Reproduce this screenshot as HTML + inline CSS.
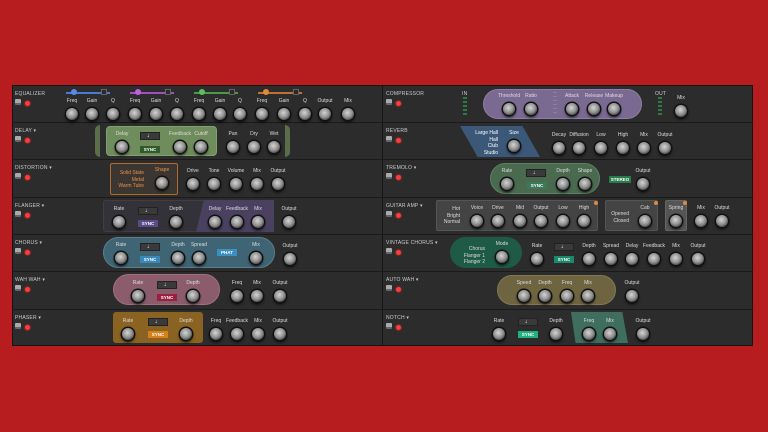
<!DOCTYPE html>
<html><head><meta charset="utf-8">
<style>
*{margin:0;padding:0;box-sizing:border-box}
body{width:768px;height:432px;background:#b71c1e;position:relative;overflow:hidden;font-family:"Liberation Sans",sans-serif}
#p{position:absolute;left:12px;top:85px;width:741px;height:261px;background:#2c2c2c;border:1px solid #151515}
.r{position:absolute;height:1px;background:#1a1a1a}
.v{position:absolute;left:382px;top:85px;width:1px;height:261px;background:#151515}
.n{position:absolute;font-size:5px;color:#ccc;letter-spacing:.2px}
.ic{position:absolute;width:6px;height:6px;background:#aaa;border-radius:1px;border-bottom:2px solid #666}
.rd{position:absolute;width:5px;height:5px;border-radius:50%;background:#ff3a3a;box-shadow:0 0 2px #f33}
.c{position:absolute;width:40px;margin-left:-20px;text-align:center;font-size:5px;color:#ddd;line-height:6px}
.c i{display:block;width:12px;height:12px;border-radius:50%;margin:4px auto 0;background:radial-gradient(circle at 45% 40%,#d4d4d4,#8e8e8e 50%,#3c3c3c 80%);box-shadow:0 0 0 1.5px #111,0 2px 3px #000}
.b{position:absolute}
.nt{position:absolute;width:20px;height:8px;margin-left:-10px;background:#3a3a3a;border:1px solid #222;color:#fff;font-size:6px;line-height:6px;text-align:center}
.sy{position:absolute;width:20px;height:7px;margin-left:-10px;font-size:4.5px;line-height:7px;text-align:center;color:#fff;font-weight:bold}
.t{position:absolute;font-size:5px;line-height:6.5px;text-align:right;color:#ddd}
.m{position:absolute;width:4px;height:20px;background:repeating-linear-gradient(#3a5 0 2px,transparent 2px 4px);opacity:.6}
</style></head><body>
<div id="p"></div>
<div class="v"></div>
<div class="r" style="left:12px;top:122px;width:741px"></div>
<div class="r" style="left:12px;top:159px;width:741px"></div>
<div class="r" style="left:12px;top:197px;width:741px"></div>
<div class="r" style="left:12px;top:234px;width:741px"></div>
<div class="r" style="left:12px;top:271px;width:741px"></div>
<div class="r" style="left:12px;top:309px;width:741px"></div>

<div class="n" style="left:15px;top:91px">EQUALIZER</div>
<div class="n" style="left:15px;top:128px">DELAY ▾</div>
<div class="n" style="left:15px;top:165px">DISTORTION ▾</div>
<div class="n" style="left:15px;top:203px">FLANGER ▾</div>
<div class="n" style="left:15px;top:240px">CHORUS ▾</div>
<div class="n" style="left:15px;top:277px">WAH WAH ▾</div>
<div class="n" style="left:15px;top:315px">PHASER ▾</div>
<div class="n" style="left:386px;top:91px">COMPRESSOR</div>
<div class="n" style="left:386px;top:128px">REVERB</div>
<div class="n" style="left:386px;top:165px">TREMOLO ▾</div>
<div class="n" style="left:386px;top:203px">GUITAR AMP ▾</div>
<div class="n" style="left:386px;top:240px">VINTAGE CHORUS ▾</div>
<div class="n" style="left:386px;top:277px">AUTO WAH ▾</div>
<div class="n" style="left:386px;top:315px">NOTCH ▾</div>
<div class="ic" style="left:15px;top:99px"></div><div class="rd" style="left:25px;top:101px"></div>
<div class="ic" style="left:15px;top:136px"></div><div class="rd" style="left:25px;top:138px"></div>
<div class="ic" style="left:15px;top:173px"></div><div class="rd" style="left:25px;top:175px"></div>
<div class="ic" style="left:15px;top:211px"></div><div class="rd" style="left:25px;top:213px"></div>
<div class="ic" style="left:15px;top:248px"></div><div class="rd" style="left:25px;top:250px"></div>
<div class="ic" style="left:15px;top:285px"></div><div class="rd" style="left:25px;top:287px"></div>
<div class="ic" style="left:15px;top:323px"></div><div class="rd" style="left:25px;top:325px"></div>
<div class="ic" style="left:386px;top:99px"></div><div class="rd" style="left:396px;top:101px"></div>
<div class="ic" style="left:386px;top:136px"></div><div class="rd" style="left:396px;top:138px"></div>
<div class="ic" style="left:386px;top:173px"></div><div class="rd" style="left:396px;top:175px"></div>
<div class="ic" style="left:386px;top:211px"></div><div class="rd" style="left:396px;top:213px"></div>
<div class="ic" style="left:386px;top:248px"></div><div class="rd" style="left:396px;top:250px"></div>
<div class="ic" style="left:386px;top:285px"></div><div class="rd" style="left:396px;top:287px"></div>
<div class="ic" style="left:386px;top:323px"></div><div class="rd" style="left:396px;top:325px"></div>

<div class="b" style="left:66px;top:92px;width:44px;height:1.5px;background:#4a7ad8"></div>
<div class="b" style="left:71px;top:89px;width:6px;height:6px;border-radius:50%;background:#5a8ae8"></div>
<div class="b" style="left:101px;top:89px;width:6px;height:6px;border:1px solid #666;background:#2a2a2a"></div>
<div class="b" style="left:130px;top:92px;width:44px;height:1.5px;background:#a050c0"></div>
<div class="b" style="left:135px;top:89px;width:6px;height:6px;border-radius:50%;background:#c060e0"></div>
<div class="b" style="left:165px;top:89px;width:6px;height:6px;border:1px solid #666;background:#2a2a2a"></div>
<div class="b" style="left:194px;top:92px;width:44px;height:1.5px;background:#4a9a4a"></div>
<div class="b" style="left:199px;top:89px;width:6px;height:6px;border-radius:50%;background:#5ac05a"></div>
<div class="b" style="left:229px;top:89px;width:6px;height:6px;border:1px solid #666;background:#2a2a2a"></div>
<div class="b" style="left:258px;top:92px;width:44px;height:1.5px;background:#c07030"></div>
<div class="b" style="left:263px;top:89px;width:6px;height:6px;border-radius:50%;background:#e08a3a"></div>
<div class="b" style="left:293px;top:89px;width:6px;height:6px;border:1px solid #666;background:#2a2a2a"></div>

<div class="b" style="left:95px;top:125px;width:195px;height:32px;border-left:5px solid #5a6e4a;border-right:5px solid #5a6e4a;border-radius:5px"></div>
<div class="b" style="left:106px;top:126px;width:111px;height:30px;background:#6f8c5c;border-radius:4px;border:1px solid #84a070"></div>
<div class="b" style="left:110px;top:163px;width:68px;height:32px;background:#3b3631;border:1px solid #b06a30;border-radius:2px"></div>
<div class="b" style="left:103px;top:200px;width:171px;height:32px;background:#333238;border:1px solid #3e3d48;border-radius:3px"></div>
<div class="b" style="left:196px;top:200px;width:78px;height:32px;background:#4a4060;clip-path:polygon(10% 0,100% 0,100% 100%,0 100%)"></div>
<div class="b" style="left:103px;top:237px;width:172px;height:31px;background:#3f6473;border:1px solid #5a8090;border-radius:16px"></div>
<div class="b" style="left:113px;top:274px;width:107px;height:31px;background:#8a5c6c;border:1px solid #a07080;border-radius:16px"></div>
<div class="b" style="left:113px;top:312px;width:90px;height:31px;background:#8a6222;border-radius:3px"></div>

<div class="b" style="left:483px;top:89px;width:159px;height:30px;background:#7a6a92;border:1px solid #8e7ea6;border-radius:15px"></div>
<div class="b" style="left:460px;top:126px;width:80px;height:31px;background:#3b5878;clip-path:polygon(0 0,78% 0,100% 100%,22% 100%)"></div>
<div class="b" style="left:490px;top:163px;width:110px;height:31px;background:#4a6a50;border:1px solid #5e8064;border-radius:16px"></div>
<div class="b" style="left:436px;top:200px;width:162px;height:31px;background:#444;border:1px solid #555;border-radius:2px"></div>
<div class="b" style="left:605px;top:200px;width:53px;height:31px;background:#444;border:1px solid #555;border-radius:2px"></div>
<div class="b" style="left:665px;top:200px;width:22px;height:31px;background:#555;border:1px solid #666;border-radius:2px"></div>
<div class="b" style="left:594px;top:201px;width:4px;height:4px;border-radius:50%;background:#e08a3a"></div>
<div class="b" style="left:654px;top:201px;width:4px;height:4px;border-radius:50%;background:#e08a3a"></div>
<div class="b" style="left:683px;top:201px;width:4px;height:4px;border-radius:50%;background:#e08a3a"></div>
<div class="b" style="left:450px;top:237px;width:72px;height:31px;background:#1e5a46;border-radius:16px"></div>
<div class="b" style="left:497px;top:275px;width:119px;height:30px;background:#6e6440;border:1px solid #847850;border-radius:15px"></div>
<div class="b" style="left:571px;top:312px;width:57px;height:31px;background:#3f6e5e;clip-path:polygon(0 0,90% 0,100% 100%,8% 100%)"></div>

<div class="n" style="left:462px;top:91px">IN</div>
<div class="m" style="left:463px;top:97px"></div>
<div class="n" style="left:655px;top:91px">OUT</div>
<div class="m" style="left:658px;top:97px"></div>
<div class="b" style="left:553px;top:92px;width:4px;height:24px;background:repeating-linear-gradient(#999 0 1px,transparent 1px 4px);opacity:.5"></div>

<div class="c" style="left:72px;top:98px">Freq<i></i></div>
<div class="c" style="left:92px;top:98px">Gain<i></i></div>
<div class="c" style="left:113px;top:98px">Q<i></i></div>
<div class="c" style="left:135px;top:98px">Freq<i></i></div>
<div class="c" style="left:156px;top:98px">Gain<i></i></div>
<div class="c" style="left:177px;top:98px">Q<i></i></div>
<div class="c" style="left:199px;top:98px">Freq<i></i></div>
<div class="c" style="left:220px;top:98px">Gain<i></i></div>
<div class="c" style="left:240px;top:98px">Q<i></i></div>
<div class="c" style="left:262px;top:98px">Freq<i></i></div>
<div class="c" style="left:284px;top:98px">Gain<i></i></div>
<div class="c" style="left:305px;top:98px">Q<i></i></div>
<div class="c" style="left:325px;top:98px">Output<i></i></div>
<div class="c" style="left:348px;top:98px">Mix<i></i></div>

<div class="c" style="left:122px;top:131px">Delay<i></i></div>
<div class="nt" style="left:150px;top:132px">♩</div>
<div class="sy" style="left:150px;top:146px;background:#2f5a2a">SYNC</div>
<div class="c" style="left:180px;top:131px">Feedback<i></i></div>
<div class="c" style="left:201px;top:131px">Cutoff<i></i></div>
<div class="c" style="left:233px;top:131px">Pan<i></i></div>
<div class="c" style="left:254px;top:131px">Dry<i></i></div>
<div class="c" style="left:274px;top:131px">Wet<i></i></div>

<div class="t" style="left:110px;width:34px;top:170px;color:#e8944a">Solid State<br>Metal<br>Warm Tube</div>
<div class="c" style="left:162px;top:167px;color:#e8944a">Shape<i></i></div>
<div class="c" style="left:193px;top:168px">Drive<i></i></div>
<div class="c" style="left:214px;top:168px">Tone<i></i></div>
<div class="c" style="left:236px;top:168px">Volume<i></i></div>
<div class="c" style="left:257px;top:168px">Mix<i></i></div>
<div class="c" style="left:278px;top:168px">Output<i></i></div>

<div class="c" style="left:119px;top:206px">Rate<i></i></div>
<div class="nt" style="left:148px;top:207px">♩</div>
<div class="sy" style="left:148px;top:220px;background:#5a4a8a">SYNC</div>
<div class="c" style="left:176px;top:206px">Depth<i></i></div>
<div class="c" style="left:215px;top:206px">Delay<i></i></div>
<div class="c" style="left:237px;top:206px">Feedback<i></i></div>
<div class="c" style="left:258px;top:206px">Mix<i></i></div>
<div class="c" style="left:289px;top:206px">Output<i></i></div>

<div class="c" style="left:121px;top:242px">Rate<i></i></div>
<div class="nt" style="left:150px;top:243px">♩</div>
<div class="sy" style="left:150px;top:256px;background:#3a88b8">SYNC</div>
<div class="c" style="left:178px;top:242px">Depth<i></i></div>
<div class="c" style="left:199px;top:242px">Spread<i></i></div>
<div class="sy" style="left:227px;top:249px;width:20px;background:#3a90c0">PHAT</div>
<div class="c" style="left:256px;top:242px">Mix<i></i></div>
<div class="c" style="left:290px;top:243px">Output<i></i></div>

<div class="c" style="left:138px;top:280px">Rate<i></i></div>
<div class="nt" style="left:167px;top:281px">♩</div>
<div class="sy" style="left:167px;top:294px;background:#9a2040">SYNC</div>
<div class="c" style="left:193px;top:280px">Depth<i></i></div>
<div class="c" style="left:237px;top:280px">Freq<i></i></div>
<div class="c" style="left:257px;top:280px">Mix<i></i></div>
<div class="c" style="left:280px;top:280px">Output<i></i></div>

<div class="c" style="left:128px;top:318px">Rate<i></i></div>
<div class="nt" style="left:158px;top:318px">♩</div>
<div class="sy" style="left:158px;top:331px;background:#d8801a">SYNC</div>
<div class="c" style="left:186px;top:318px">Depth<i></i></div>
<div class="c" style="left:216px;top:318px">Freq<i></i></div>
<div class="c" style="left:237px;top:318px">Feedback<i></i></div>
<div class="c" style="left:258px;top:318px">Mix<i></i></div>
<div class="c" style="left:280px;top:318px">Output<i></i></div>

<div class="c" style="left:509px;top:93px">Threshold<i></i></div>
<div class="c" style="left:531px;top:93px">Ratio<i></i></div>
<div class="c" style="left:572px;top:93px">Attack<i></i></div>
<div class="c" style="left:594px;top:93px">Release<i></i></div>
<div class="c" style="left:614px;top:93px">Makeup<i></i></div>
<div class="c" style="left:681px;top:95px">Mix<i></i></div>

<div class="t" style="left:462px;width:36px;top:130px;color:#fff">Large Hall<br>Hall<br>Club<br>Studio</div>
<div class="c" style="left:514px;top:130px;color:#fff">Size<i></i></div>
<div class="c" style="left:559px;top:132px">Decay<i></i></div>
<div class="c" style="left:579px;top:132px">Diffusion<i></i></div>
<div class="c" style="left:601px;top:132px">Low<i></i></div>
<div class="c" style="left:623px;top:132px">High<i></i></div>
<div class="c" style="left:644px;top:132px">Mix<i></i></div>
<div class="c" style="left:665px;top:132px">Output<i></i></div>

<div class="c" style="left:507px;top:168px">Rate<i></i></div>
<div class="nt" style="left:536px;top:169px">♩</div>
<div class="sy" style="left:537px;top:182px;background:#3a7a5a">SYNC</div>
<div class="c" style="left:563px;top:168px">Depth<i></i></div>
<div class="c" style="left:585px;top:168px">Shape<i></i></div>
<div class="sy" style="left:619px;top:176px;width:22px;background:#2a7a4a">STEREO</div>
<div class="c" style="left:643px;top:168px">Output<i></i></div>

<div class="t" style="left:436px;width:24px;top:206px">Hot<br>Bright<br>Normal</div>
<div class="c" style="left:477px;top:205px">Voice<i></i></div>
<div class="c" style="left:498px;top:205px">Drive<i></i></div>
<div class="c" style="left:520px;top:205px">Mid<i></i></div>
<div class="c" style="left:541px;top:205px">Output<i></i></div>
<div class="c" style="left:563px;top:205px">Low<i></i></div>
<div class="c" style="left:584px;top:205px">High<i></i></div>
<div class="t" style="left:605px;width:24px;top:211px">Opened<br>Closed</div>
<div class="c" style="left:645px;top:205px">Cab<i></i></div>
<div class="c" style="left:676px;top:205px">Spring<i></i></div>
<div class="c" style="left:701px;top:205px">Mix<i></i></div>
<div class="c" style="left:722px;top:205px">Output<i></i></div>

<div class="t" style="left:452px;width:33px;top:246px">Chorus<br>Flanger 1<br>Flanger 2</div>
<div class="c" style="left:502px;top:241px">Mode<i></i></div>
<div class="c" style="left:537px;top:243px">Rate<i></i></div>
<div class="nt" style="left:564px;top:243px">♩</div>
<div class="sy" style="left:564px;top:256px;background:#1a8a6a">SYNC</div>
<div class="c" style="left:589px;top:243px">Depth<i></i></div>
<div class="c" style="left:611px;top:243px">Spread<i></i></div>
<div class="c" style="left:632px;top:243px">Delay<i></i></div>
<div class="c" style="left:654px;top:243px">Feedback<i></i></div>
<div class="c" style="left:676px;top:243px">Mix<i></i></div>
<div class="c" style="left:698px;top:243px">Output<i></i></div>

<div class="c" style="left:524px;top:280px">Speed<i></i></div>
<div class="c" style="left:545px;top:280px">Depth<i></i></div>
<div class="c" style="left:567px;top:280px">Freq<i></i></div>
<div class="c" style="left:588px;top:280px">Mix<i></i></div>
<div class="c" style="left:632px;top:280px">Output<i></i></div>

<div class="c" style="left:499px;top:318px">Rate<i></i></div>
<div class="nt" style="left:528px;top:318px">♩</div>
<div class="sy" style="left:528px;top:331px;background:#20b080">SYNC</div>
<div class="c" style="left:556px;top:318px">Depth<i></i></div>
<div class="c" style="left:589px;top:318px">Freq<i></i></div>
<div class="c" style="left:610px;top:318px">Mix<i></i></div>
<div class="c" style="left:643px;top:318px">Output<i></i></div>
</body></html>
